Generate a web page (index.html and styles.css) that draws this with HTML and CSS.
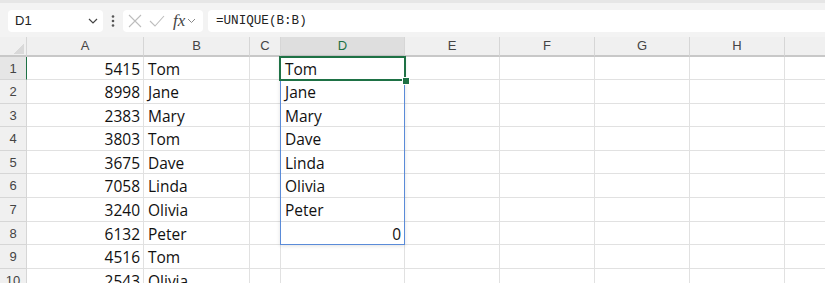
FILE: index.html
```html
<!DOCTYPE html>
<html lang="en">
<head>
  <meta charset="UTF-8" />
  <title>UNIQUE spill</title>
  <link rel="stylesheet" href="styles.css">
</head>
<body>
  <div class="toolbar">
    <div class="box namebox">
      <span>D1</span>
      <svg width="10" height="6" viewBox="0 0 10 6"><path d="M1 1 L5 5 L9 1" fill="none" stroke="#444" stroke-width="1.2"/></svg>
    </div>
    <div class="kebab">
      <svg width="4" height="14" viewBox="0 0 4 14"><circle cx="2" cy="2.5" r="1.3" fill="#555"/><circle cx="2" cy="7" r="1.3" fill="#555"/><circle cx="2" cy="11.5" r="1.3" fill="#555"/></svg>
    </div>
    <div class="box fxbox">
      <svg width="14" height="14" viewBox="0 0 14 14"><path d="M1 1 L13 13 M13 1 L1 13" stroke="#bdbdbd" stroke-width="1.1" fill="none"/></svg>
      <svg width="16" height="14" viewBox="0 0 16 14"><path d="M1 7 L6 12 L15 2" stroke="#bdbdbd" stroke-width="1.1" fill="none"/></svg>
      <span class="fx">fx</span>
      <svg width="9" height="6" viewBox="0 0 9 6"><path d="M1 1 L4.5 4.5 L8 1" fill="none" stroke="#888" stroke-width="1"/></svg>
    </div>
    <div class="box formula">=UNIQUE(B:B)</div>
  </div>

  <div class="sheet">
    <div class="grid" id="grid"></div>
    <div class="spill"></div>
    <div class="active"></div>
    <div class="handle"></div>
  </div>

  <script>
    const cols = ["A", "B", "C", "D", "E", "F", "G", "H", ""];
    const nums = [5415, 8998, 2383, 3803, 3675, 7058, 3240, 6132, 4516, 2543];
    const names = ["Tom", "Jane", "Mary", "Tom", "Dave", "Linda", "Olivia", "Peter", "Tom", "Olivia"];
    const unique = ["Tom", "Jane", "Mary", "Dave", "Linda", "Olivia", "Peter", 0];
    const grid = document.getElementById("grid");

    function cell(cls, text) {
      const el = document.createElement("div");
      el.className = "cell " + cls;
      el.textContent = text === undefined ? "" : text;
      grid.appendChild(el);
    }

    cell("corner", "");
    cols.forEach((c) => cell("colhead" + (c === "D" ? " sel" : ""), c));

    for (let r = 0; r < 10; r++) {
      cell("rowhead" + (r === 0 ? " sel" : ""), r + 1);
      cell("num", nums[r]);
      cell("", names[r]);
      cell("", "");
      const u = unique[r];
      cell(typeof u === "number" ? "num" : "", u);
      for (let k = 0; k < 5; k++) cell("", "");
    }
  </script>
</body>
</html>
```

FILE: styles.css
```css
body {
  margin: 0;
  background: #f3f3f3;
  font-family: "Liberation Sans", Arial, sans-serif;
  overflow: hidden;
}

.toolbar {
  display: flex;
  align-items: center;
  height: 37px;
  box-sizing: border-box;
  padding: 5px 0 4px 8px;
  border-top: 3px solid #e6e6e6;
  background: #f3f3f3;
}

.box {
  height: 22px;
  background: #fff;
  border-radius: 4px;
  display: flex;
  align-items: center;
  box-sizing: border-box;
}

.namebox {
  width: 95px;
  padding: 0 5px 0 7px;
  justify-content: space-between;
  font-size: 13px;
  color: #222;
}

.kebab {
  width: 20px;
  display: flex;
  justify-content: center;
}

.fxbox {
  width: 80px;
  padding: 0 3px 0 5px;
  gap: 7px;
}

.fx {
  font-family: "Liberation Serif", "Times New Roman", serif;
  font-style: italic;
  font-size: 17px;
  color: #444;
  margin-left: 1px;
  margin-right: -5px;
}

.formula {
  flex: 1;
  margin-left: 5px;
  border-radius: 4px 0 0 4px;
  padding-left: 8px;
  font-family: "Liberation Mono", "DejaVu Sans Mono", monospace;
  font-size: 12.6px;
  color: #222;
}

.sheet {
  position: relative;
  background: #fff;
}

.grid {
  display: grid;
  grid-template-columns: 27px 117px 106px 31px 124px 95px 95px 95px 95px 60px;
  grid-template-rows: 20px 23px 24px 23px 24px 23px 24px 24px 23px 24px 23px;
}

.cell {
  box-sizing: border-box;
  border-right: 1px solid #e1e1e1;
  border-bottom: 1px solid #e1e1e1;
  font-family: "Open Sans", "Noto Sans", sans-serif;
  font-size: 15.5px;
  color: #111;
  padding: 1px 4px 0;
  line-height: 22px;
  white-space: nowrap;
  overflow: hidden;
}

.num {
  text-align: right;
  padding-right: 3px;
}

.corner,
.colhead,
.rowhead {
  background: #f0f0f0;
  font-family: "Liberation Sans", Arial, sans-serif;
  font-size: 13px;
  color: #444;
  text-align: center;
  border-color: #d6d6d6;
}

.corner,
.colhead {
  border-bottom: 2px solid #c8c8c8;
  line-height: 18px;
  padding-top: 0;
}

.corner {
  background: linear-gradient(135deg, #f0f0f0 60%, #d9d9d9 60%) no-repeat 12px 3px / 12px 14px, #f0f0f0;
}

.colhead.sel {
  background: #dedede;
  color: #1e7145;
}

.rowhead {
  padding: 0;
  line-height: 23px;
}

.rowhead.sel {
  background: #e6e6e6;
  border-right: 1px solid #1e7145;
}

.spill {
  position: absolute;
  left: 280px;
  top: 19px;
  width: 125px;
  height: 189px;
  box-sizing: border-box;
  border: 1px solid #5a8bd8;
  box-shadow: 0 1px 4px rgba(0, 0, 0, 0.12);
}

.active {
  position: absolute;
  left: 279px;
  top: 19px;
  width: 127px;
  height: 25px;
  box-sizing: border-box;
  border: 2px solid #1e7145;
}

.handle {
  position: absolute;
  left: 402px;
  top: 40px;
  width: 6px;
  height: 6px;
  background: #1e7145;
  border: 1px solid #fff;
}
```
